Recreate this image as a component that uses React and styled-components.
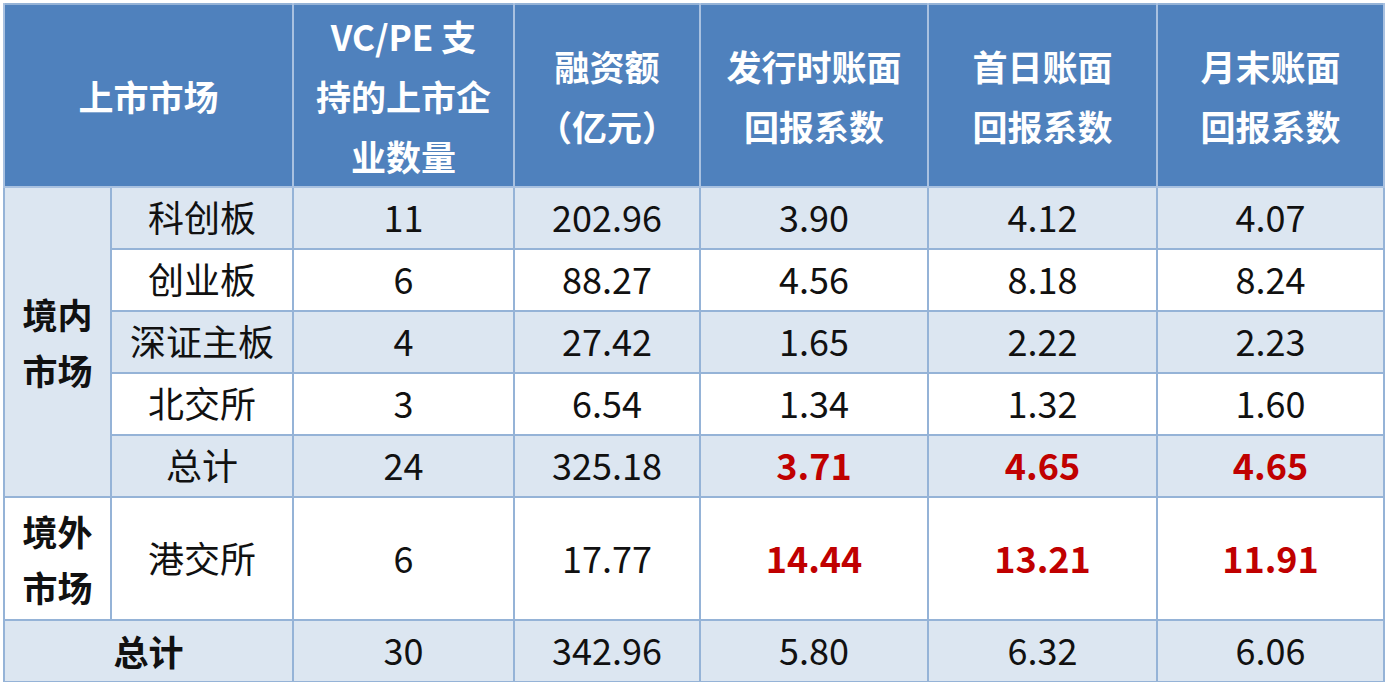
import React from 'react'
import styled, { createGlobalStyle } from 'styled-components'

// page defaults
const Global = createGlobalStyle`
    html, body {
        margin: 0;
        padding: 0;
        background: #ffffff;
    }
    body {
        font-family: "Noto Sans CJK SC", "Noto Sans", sans-serif;
    }
`

// the domestic board rows
const domestic = [
    { board: '科创板', count: '11', amount: '202.96', issue: '3.90', first: '4.12', month: '4.07', shade: true },
    { board: '创业板', count: '6', amount: '88.27', issue: '4.56', first: '8.18', month: '8.24' },
    { board: '深证主板', count: '4', amount: '27.42', issue: '1.65', first: '2.22', month: '2.23', shade: true },
    { board: '北交所', count: '3', amount: '6.54', issue: '1.34', first: '1.32', month: '1.60' },
]

export default function App() {
    return (
        <>
            <Global />
            <Page>
                <Table>
                    <colgroup>
                        <col style={{ width: 107 }} />
                        <col style={{ width: 182 }} />
                        <col style={{ width: 221 }} />
                        <col style={{ width: 186 }} />
                        <col style={{ width: 228 }} />
                        <col style={{ width: 229 }} />
                        <col style={{ width: 227 }} />
                    </colgroup>
                    <Head>
                        <tr>
                            <Header colSpan={2}>上市市场</Header>
                            <Header>VC/PE 支<br />持的上市企<br />业数量</Header>
                            <Header>融资额<br />（亿元）</Header>
                            <Header>发行时账面<br />回报系数</Header>
                            <Header>首日账面<br />回报系数</Header>
                            <Header>月末账面<br />回报系数</Header>
                        </tr>
                    </Head>
                    <tbody>
                        {domestic.map((row, index) => (
                            <Row key={row.board} $shade={row.shade}>
                                {index === 0 && (
                                    <Market rowSpan={5} $shade>境内<br />市场</Market>
                                )}
                                <Cell>{row.board}</Cell>
                                <Cell>{row.count}</Cell>
                                <Cell>{row.amount}</Cell>
                                <Cell>{row.issue}</Cell>
                                <Cell>{row.first}</Cell>
                                <Cell>{row.month}</Cell>
                            </Row>
                        ))}
                        <Row $shade>
                            <Cell>总计</Cell>
                            <Cell>24</Cell>
                            <Cell>325.18</Cell>
                            <Cell $hot>3.71</Cell>
                            <Cell $hot>4.65</Cell>
                            <Cell $hot>4.65</Cell>
                        </Row>
                        <Row $tall>
                            <Market>境外<br />市场</Market>
                            <Cell>港交所</Cell>
                            <Cell>6</Cell>
                            <Cell>17.77</Cell>
                            <Cell $hot>14.44</Cell>
                            <Cell $hot>13.21</Cell>
                            <Cell $hot>11.91</Cell>
                        </Row>
                        <Row $shade>
                            <Market colSpan={2}>总计</Market>
                            <Cell>30</Cell>
                            <Cell>342.96</Cell>
                            <Cell>5.80</Cell>
                            <Cell>6.32</Cell>
                            <Cell>6.06</Cell>
                        </Row>
                    </tbody>
                </Table>
            </Page>
        </>
    )
}

// the container
const Page = styled.div`
    padding: 3px 3px 0 3px;
`

const Table = styled.table`
    border-collapse: collapse;
    table-layout: fixed;
    width: 1380px;
    border: 2px solid #95b3d7;
`

// headers
const Head = styled.thead`
    background: #4f81bd;
`

const Header = styled.th`
    height: 181px;
    padding: 0;
    font-size: 35px;
    line-height: 60px;
    font-weight: 700;
    color: #ffffff;
    text-align: center;
    vertical-align: middle;
    border: 2px solid #a9c1e0;
    border-top: none;
`

// a body row
const Row = styled.tr`
    height: ${props => props.$tall ? '123px' : '62px'};
    background: ${props => props.$shade ? '#dce6f1' : '#ffffff'};
`

const Cell = styled.td`
    padding: 0 0 4px 0;
    font-size: 36px;
    line-height: 40px;
    color: ${props => props.$hot ? '#c00000' : '#111111'};
    font-weight: ${props => props.$hot ? 700 : 400};
    text-align: center;
    vertical-align: middle;
    border: 2px solid #95b3d7;
`

// the market label
const Market = styled(Cell)`
    padding: 0;
    font-size: 35px;
    font-weight: 700;
    line-height: 56px;
    background: ${props => props.$shade ? '#dce6f1' : 'transparent'};
`
